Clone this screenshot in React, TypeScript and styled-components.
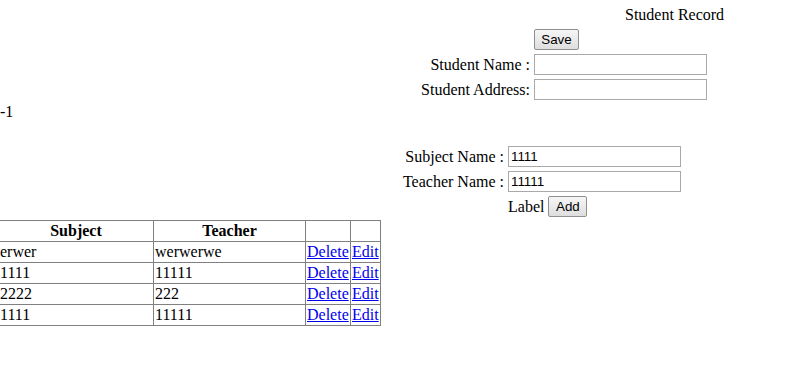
import styled, { createGlobalStyle } from "styled-components"

const GlobalStyle = createGlobalStyle`
    html, body {
        margin: 0;
        padding: 0;
        background: #fff;
    }
    body {
        font-family: "Liberation Serif", "Times New Roman", serif;
        font-size: 16px;
        color: #000;
    }
`

const Page = styled.div`
    width: 810px;
    height: 392px;
    overflow: hidden;
    display: flex;
    flex-direction: column;
    align-items: flex-start;
`

const FormBlock = styled.div<{ $left: number, $top: number }>`
    margin-left: ${p => p.$left}px;
    margin-top: ${p => p.$top}px;
    display: flex;
    flex-direction: column;
    gap: 4px;
`

const Title = styled.div`
    padding-left: 225px;
    height: 18px;
    line-height: 18px;
    margin-bottom: 1px;
`

const Row = styled.div`
    display: flex;
    align-items: center;
    gap: 4px;
    height: 21px;
`

const Label = styled.span<{ $width: number }>`
    width: ${p => p.$width}px;
    text-align: right;
    white-space: nowrap;
`

const TextInput = styled.input`
    box-sizing: border-box;
    width: 173px;
    height: 21px;
    border: 1px solid #a9a9a9;
    padding: 1px 2px;
    margin: 0;
    font-family: "Liberation Sans", Arial, sans-serif;
    font-size: 13.33px;
    color: #000;
    background: #fff;
    outline: none;
`

const Button = styled.button<{ $width: number }>`
    box-sizing: border-box;
    width: ${p => p.$width}px;
    height: 21px;
    padding: 0;
    margin: 0;
    font-family: "Liberation Sans", Arial, sans-serif;
    font-size: 13.33px;
    color: #000;
    border: 1px solid #8f8f8f;
    border-radius: 2px;
    background: linear-gradient(#f6f6f6, #dedede);
`

const Inline = styled.span`
    white-space: nowrap;
`

const Status = styled.div`
    margin-top: 3px;
    height: 18px;
    line-height: 18px;
`

const Table = styled.table`
    margin-top: 3px;
    margin-left: -2px;
    width: 382px;
    border-collapse: collapse;
    border: 1px solid #808080;
    table-layout: fixed;
    & th, & td {
        border: 1px solid #808080;
        padding: 0 1px;
        height: 20px;
        line-height: 18px;
        white-space: nowrap;
        overflow: hidden;
    }
    & th {
        font-weight: bold;
        text-align: center;
    }
    & td {
        text-align: left;
    }
    & a {
        color: #0000ee;
        text-decoration: underline;
    }
`

const rows = [
    { subject: "erwer", teacher: "werwerwe" },
    { subject: "1111", teacher: "11111" },
    { subject: "2222", teacher: "222" },
    { subject: "1111", teacher: "11111" },
]

export default function App() {
    return (
        <Page>
            <GlobalStyle />
            <FormBlock $left={400} $top={6}>
                <Title>Student Record</Title>
                <Row>
                    <Label $width={130} />
                    <Button $width={45}>Save</Button>
                </Row>
                <Row>
                    <Label $width={130}>Student Name :</Label>
                    <TextInput defaultValue="" />
                </Row>
                <Row>
                    <Label $width={130}>Student Address:</Label>
                    <TextInput defaultValue="" />
                </Row>
            </FormBlock>
            <Status>-1</Status>
            <FormBlock $left={380} $top={25}>
                <Row>
                    <Label $width={124}>Subject Name :</Label>
                    <TextInput defaultValue="1111" />
                </Row>
                <Row>
                    <Label $width={124}>Teacher Name :</Label>
                    <TextInput defaultValue="11111" />
                </Row>
                <Row>
                    <Label $width={124} />
                    <Inline>Label</Inline>
                    <Button $width={39}>Add</Button>
                </Row>
            </FormBlock>
            <Table>
                <colgroup>
                    <col style={{ width: 155 }} />
                    <col style={{ width: 152 }} />
                    <col style={{ width: 45 }} />
                    <col style={{ width: 30 }} />
                </colgroup>
                <thead>
                    <tr>
                        <th>Subject</th>
                        <th>Teacher</th>
                        <th></th>
                        <th></th>
                    </tr>
                </thead>
                <tbody>
                    {rows.map((r, i) => (
                        <tr key={i}>
                            <td>{r.subject}</td>
                            <td>{r.teacher}</td>
                            <td><a href="#">Delete</a></td>
                            <td><a href="#">Edit</a></td>
                        </tr>
                    ))}
                </tbody>
            </Table>
        </Page>
    )
}
